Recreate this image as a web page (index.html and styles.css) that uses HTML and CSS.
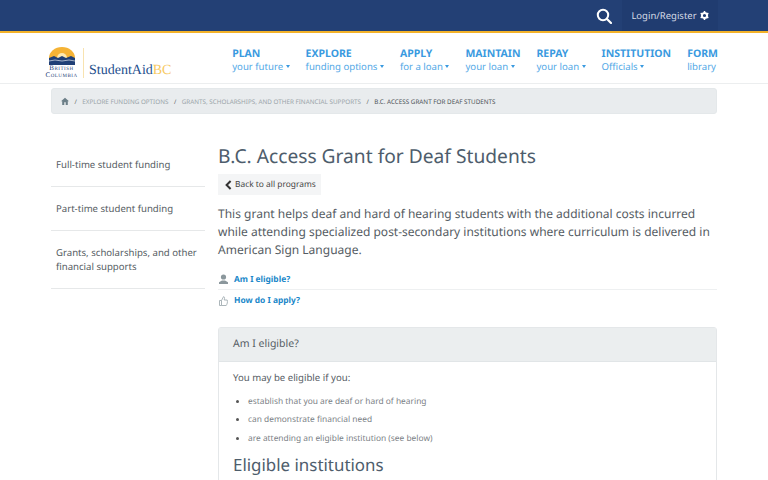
FILE: index.html
```html
<!DOCTYPE html>
<html lang="en">
<head>
    <meta charset="UTF-8">
    <meta name="viewport" content="width=device-width, initial-scale=1.0">
    <title>B.C. Access Grant for Deaf Students</title>
    <link rel="stylesheet" href="styles.css">
</head>
<body>
    <div class="topbar">
        <button type="button" class="search-button" aria-label="Search">
            <svg width="16" height="16" viewBox="0 0 16 16"><circle cx="7" cy="7" r="5.2" fill="none" stroke="#fff" stroke-width="2"/><path d="M11 11l4 4" stroke="#fff" stroke-width="2.2" stroke-linecap="round"/></svg>
        </button>
        <div class="login">Login/Register
            <svg width="9" height="9" viewBox="0 0 10 10"><circle cx="5" cy="5" r="2.9" fill="none" stroke="#fff" stroke-width="2.2"/><path d="M5 0v2M5 8v2M0.7 2.5l1.7 1M7.6 6.5l1.7 1M0.7 7.5l1.7-1M7.6 3.5l1.7-1" stroke="#fff" stroke-width="1.7"/></svg>
        </div>
    </div>

    <header class="site-header">
        <a class="logo" href="#">
            <span class="bc-mark">
                <svg width="28" height="18" viewBox="0 0 28 18">
                    <path d="M1 11a13 11 0 0 1 26 0z" fill="#f5b335"/>
                    <circle cx="14" cy="11" r="5" fill="#fde9b0"/>
                    <path d="M1 11l5-2 4 2 4-2 4 2 5-2 4 2v7H1z" fill="#1f3f76"/>
                    <path d="M1 14l6-1 7 1 7-1 6 1" fill="none" stroke="#fff" stroke-width="0.6"/>
                </svg>
                <span class="bc-name">British<br>Columbia</span>
            </span>
            <span class="logo-rule"></span>
            <span class="logo-text">StudentAid<span class="logo-bc">BC</span></span>
        </a>
        <nav class="main-nav">
            <a href="#"><b>PLAN</b><span>your future <i class="caret"></i></span></a>
            <a href="#"><b>EXPLORE</b><span>funding options <i class="caret"></i></span></a>
            <a href="#"><b>APPLY</b><span>for a loan <i class="caret"></i></span></a>
            <a href="#"><b>MAINTAIN</b><span>your loan <i class="caret"></i></span></a>
            <a href="#"><b>REPAY</b><span>your loan <i class="caret"></i></span></a>
            <a href="#"><b>INSTITUTION</b><span>Officials <i class="caret"></i></span></a>
            <a href="#"><b>FORM</b><span>library</span></a>
        </nav>
    </header>

    <div class="breadcrumb">
        <svg width="8" height="8" viewBox="0 0 10 10"><path d="M5 .8L0 5.400h1.500V10h2.600V6.600h1.800V10h2.600V5.400H10z" fill="#6c7f88"/></svg>
        <span class="sep">/</span>
        <a href="#">Explore funding options</a>
        <span class="sep">/</span>
        <a href="#">Grants, scholarships, and other financial supports</a>
        <span class="sep">/</span>
        <span class="current">B.C. Access Grant for Deaf Students</span>
    </div>

    <div class="content">
        <aside class="side-nav">
            <a href="#">Full-time student funding</a>
            <a href="#">Part-time student funding</a>
            <a href="#">Grants, scholarships, and other financial supports</a>
        </aside>

        <main class="main-col">
            <h1>B.C. Access Grant for Deaf Students</h1>
            <a class="back-link" href="#">
                <svg width="7" height="10" viewBox="0 0 7 10"><path d="M5.600 1L1.600 5l4 4" fill="none" stroke="#333" stroke-width="2"/></svg>
                Back to all programs
            </a>
            <p class="lead">This grant helps deaf and hard of hearing students with the additional costs incurred while attending specialized post-secondary institutions where curriculum is delivered in American Sign Language.</p>

            <ul class="jump-list">
                <li>
                    <svg width="9" height="10" viewBox="0 0 9 10"><circle cx="4.500" cy="3" r="2.600" fill="#8b979c"/><path d="M0 10V8.200L3 6.500h3l3 1.700V10z" fill="#8b979c"/></svg>
                    <a href="#">Am I eligible?</a>
                </li>
                <li>
                    <svg width="9" height="10" viewBox="0 0 9 10"><path d="M.5 4.500h2v5h-2zM2.500 4.500L4.500.7c1 0 1.200 1 1 2L5.200 4h3c.6 2 0 4-1 5.500H2.500" fill="none" stroke="#a3aeb2" stroke-width="0.9"/></svg>
                    <a href="#">How do I apply?</a>
                </li>
            </ul>

            <section class="panel">
                <h2 class="panel-title">Am I eligible?</h2>
                <div class="panel-body">
                    <p>You may be eligible if you:</p>
                    <ul>
                        <li>establish that you are deaf or hard of hearing</li>
                        <li>can demonstrate financial need</li>
                        <li>are attending an eligible institution (see below)</li>
                    </ul>
                    <h3>Eligible institutions</h3>
                </div>
            </section>
        </main>
    </div>
</body>
</html>
```

FILE: styles.css
```css
* { box-sizing: border-box; }
html, body { height: 480px; overflow: hidden; }
body { margin: 0; font-family: "Noto Sans", sans-serif; background-color: #fff; color: #494f57; text-rendering: geometricPrecision; }
a { text-decoration: none; }

.topbar { height: 33px; background-color: #234075; border-bottom: 2px solid #f3b229; display: flex; justify-content: flex-end; padding-right: 50px; }
.search-button { width: 36px; padding: 0; background: none; border: none; display: flex; align-items: center; justify-content: center; }
.login { width: 96px; font-size: 9.5px; color: #d5dbe6; background-color: #203c70; display: flex; align-items: center; justify-content: center; gap: 3px; white-space: nowrap; }

.site-header { height: 51px; border-bottom: 1px solid #eceeef; display: flex; justify-content: space-between; padding: 16px 50px 0 45px; }
.logo { display: flex; align-items: flex-start; height: 34px; margin-top: -4px; }
.bc-mark { width: 33px; display: flex; flex-direction: column; align-items: center; padding-top: 2px; }
.bc-name { font-family: "Liberation Serif", serif; font-size: 7px; line-height: 6.5px; letter-spacing: .5px; color: #234075; text-align: center; font-variant: small-caps; white-space: nowrap; }
.logo-rule { width: 1px; height: 30px; margin: 3px 5px 0 5px; background-color: #f8e3b0; }
.logo-text { font-family: "Liberation Serif", serif; font-size: 14px; color: #234e8c; margin-top: 17px; line-height: 18px; white-space: nowrap; }
.logo-bc { color: #f7c95f; }

.main-nav { display: flex; gap: 16px; }
.main-nav a { display: flex; flex-direction: column; color: #3a9ae0; white-space: nowrap; }
.main-nav b { font-size: 10.5px; line-height: 11.5px; font-weight: 700; }
.main-nav span { font-size: 9.6px; line-height: 11px; color: #52a8e6; }
.caret { display: inline-block; width: 0; height: 0; vertical-align: 2px; border-top: 3px solid #3a9ae0; border-left: 2.500px solid transparent; border-right: 2.500px solid transparent; }

.breadcrumb { height: 26px; margin: 4px 51px 0; padding-left: 9px; background-color: #e9ecee; border: 1px solid #e4e8ea; border-radius: 3px; display: flex; align-items: center; font-size: 6.3px; text-transform: uppercase; color: #4d5358; white-space: nowrap; }
.breadcrumb a { color: #9aa4a9; }
.breadcrumb .sep { margin: 0 5.500px; color: #666; }

.content { display: flex; gap: 13px; margin: 0 51px; }

.side-nav { width: 154px; padding-top: 28px; flex-shrink: 0; }
.side-nav a { display: block; padding: 15px 5px 14px; font-size: 9.6px; line-height: 14px; color: #555c62; border-bottom: 1px solid #e6e8e9; }
.side-nav a:first-child { padding-top: 16px; }

.main-col { flex: 1; padding-top: 28px; }
h1 { margin: 0; font-size: 19.200px; line-height: 28px; font-weight: 400; color: #4e5d6c; }
.back-link { display: inline-flex; align-items: center; gap: 3px; height: 21px; margin-top: 4px; padding: 0 5px 0 7px; background-color: #f4f5f6; font-size: 8.400px; color: #444; }
.lead { margin: 10px 0 0; font-size: 12px; line-height: 18px; color: #555c63; }

.jump-list { list-style: none; margin: 10px 0 0; padding: 0; }
.jump-list li { height: 21px; padding-left: 1px; display: flex; align-items: center; gap: 6px; border-bottom: 1px solid #eef0f1; }
.jump-list li:last-child { border-bottom: none; }
.jump-list a { font-size: 8.400px; font-weight: 700; color: #2087c9; }

.panel { margin-top: 16px; border: 1px solid #e4e7e9; border-radius: 3px 3px 0 0; }
.panel-title { margin: 0; height: 34px; padding: 0 14px; background-color: #ebeeef; border-bottom: 1px solid #e1e5e7; font-size: 10.500px; line-height: 33px; font-weight: 400; color: #555c63; }
.panel-body { padding: 9px 14px; }
.panel-body p { margin: 0; font-size: 9.600px; line-height: 14px; color: #555c63; }
.panel-body ul { margin: 8px 0 0; padding-left: 15px; }
.panel-body li { font-size: 8.400px; line-height: 18.300px; color: #7b8186; }
.panel-body li::marker { color: #555; }
h3 { margin: 4px 0 0; font-size: 16.900px; line-height: 26px; font-weight: 400; color: #4e5d6c; }
```
